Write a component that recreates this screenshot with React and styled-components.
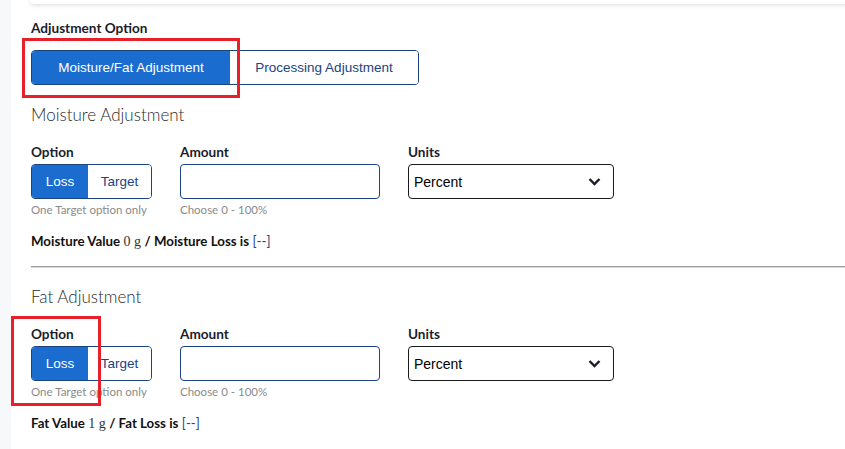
import React, { useState } from 'react'
import styled, { createGlobalStyle } from 'styled-components'

const GlobalStyle = createGlobalStyle`
  html, body {
    margin: 0;
    padding: 0;
    background: #f7f8fa;
  }
  * {
    box-sizing: border-box;
  }
`

const sans = `'Lato', 'Liberation Sans', sans-serif`

const Page = styled.div`
  display: flex;
  height: 449px;
  overflow: hidden;
`

const Rail = styled.div`
  width: 11px;
  flex-shrink: 0;
  background: #f7f8fa;
`

const Panel = styled.div`
  flex: 1;
  background: #ffffff;
  padding: 0 0 0 20px;
  font-family: ${sans};
  color: #1b1b1b;
`

const TopCard = styled.div`
  height: 4px;
  margin-left: -1px;
  margin-right: -10px;
  margin-bottom: 15px;
  background: #ffffff;
  border-radius: 0 0 6px 6px;
  box-shadow: 0 1px 4px rgba(0, 0, 0, 0.16);
`

const FieldLabel = styled.div`
  font-size: 13.6px;
  font-weight: 700;
  color: #1c1d2b;
  line-height: 18px;
  margin-bottom: ${(p) => p.gap || 3}px;
`

const Wrap = styled.div`
  position: relative;
  display: inline-flex;
`

const Highlight = styled.div`
  position: absolute;
  border: 3px solid #e8202a;
  pointer-events: none;
  left: ${(p) => p.left}px;
  top: ${(p) => p.top}px;
  width: ${(p) => p.w}px;
  height: ${(p) => p.h}px;
`

const Segmented = styled.div`
  display: inline-flex;
  border: 1px solid #1a4480;
  border-radius: 4px;
  overflow: hidden;
  height: 35px;
`

const Segment = styled.button`
  width: ${(p) => p.w}px;
  border: none;
  margin: 0;
  padding: 0;
  font-family: 'Liberation Sans', Arial, sans-serif;
  font-size: 13.5px;
  cursor: pointer;
  background: ${(p) => (p.active ? '#1a6dcf' : '#ffffff')};
  color: ${(p) => (p.active ? '#ffffff' : '#1a4480')};
`

const SectionTitle = styled.h2`
  margin: 0;
  font-size: 17px;
  font-weight: 300;
  color: #2b2b2b;
  line-height: 22px;
`

const FieldsRow = styled.div`
  display: flex;
  gap: 28px;
  align-items: flex-start;
  margin-top: 17px;
`

const Field = styled.div`
  display: flex;
  flex-direction: column;
  width: ${(p) => p.w}px;
`

const Input = styled.input`
  width: 200px;
  height: 35px;
  border: 1px solid #1a4480;
  border-radius: 4px;
  outline: none;
  padding: 0 8px;
  font-size: 14px;
`

const SelectBox = styled.div`
  width: 206px;
  height: 35px;
  border: 1px solid #1b1b1b;
  border-radius: 4px;
  display: flex;
  align-items: center;
  justify-content: space-between;
  padding: 0 12px 0 5px;
  font-family: 'Liberation Sans', Arial, sans-serif;
  font-size: 14px;
  color: #000;
`

const Hint = styled.div`
  margin-top: 4px;
  font-size: 11.5px;
  color: #8a8a8a;
  line-height: 14px;
  white-space: nowrap;
`

const Summary = styled.div`
  margin-top: 15px;
  font-size: 13.3px;
  line-height: 18px;
  color: #111;
  b {
    font-weight: 700;
  }
`

const Num = styled.span`
  font-family: 'Liberation Serif', serif;
  font-size: 14px;
  color: #333;
`

const Dash = styled.span`
  color: #1a4480;
`

const Divider = styled.hr`
  margin: 15px 0 0;
  border: none;
  border-top: 1px solid #9e9e9e;
  border-bottom: 1px solid #d8d8d8;
`

const Block = styled.div`
  padding-top: ${(p) => p.top}px;
`

const Chevron = () => (
  <svg width='13' height='9' viewBox='0 0 13 9'>
    <polyline
      points='1.5,2 6.5,7 11.5,2'
      fill='none'
      stroke='#1c1d2b'
      strokeWidth='2.4'
    />
  </svg>
)

const Adjustment = ({ title, nutrient, value, mark, topPad }) => {
  const [mode, setMode] = useState('loss')
  return (
    <Block top={topPad}>
      <SectionTitle>{title}</SectionTitle>
      <FieldsRow>
        <Field w={121}>
          <FieldLabel>Option</FieldLabel>
          <Wrap>
            <Segmented>
              <Segment w={56} active={mode === 'loss'} onClick={() => setMode('loss')}>
                Loss
              </Segment>
              <Segment w={63} active={mode === 'target'} onClick={() => setMode('target')}>
                Target
              </Segment>
            </Segmented>
            {mark && <Highlight left={-20} top={-30} w={90} h={90} />}
          </Wrap>
          <Hint>One Target option only</Hint>
        </Field>
        <Field w={200}>
          <FieldLabel>Amount</FieldLabel>
          <Input type='text' />
          <Hint>Choose 0 - 100%</Hint>
        </Field>
        <Field w={206}>
          <FieldLabel>Units</FieldLabel>
          <SelectBox>
            <span>Percent</span>
            <Chevron />
          </SelectBox>
        </Field>
      </FieldsRow>
      <Summary>
        <b>{nutrient} Value</b> <Num>{value} g</Num> <b>/ {nutrient} Loss is</b>{' '}
        <Dash>[--]</Dash>
      </Summary>
    </Block>
  )
}

const App = () => {
  const [tab, setTab] = useState('mf')
  return (
    <>
      <GlobalStyle />
      <Page>
        <Rail />
        <Panel>
          <TopCard />
          <FieldLabel gap={13}>Adjustment Option</FieldLabel>
          <Wrap>
            <Segmented>
              <Segment w={198} active={tab === 'mf'} onClick={() => setTab('mf')}>
                Moisture/Fat Adjustment
              </Segment>
              <Segment w={188} active={tab === 'proc'} onClick={() => setTab('proc')}>
                Processing Adjustment
              </Segment>
            </Segmented>
            <Highlight left={-9} top={-12} w={218} h={60} />
          </Wrap>
          <Adjustment title='Moisture Adjustment' nutrient='Moisture' value={0} topPad={19} mark={false} />
          <Divider />
          <Adjustment title='Fat Adjustment' nutrient='Fat' value={1} topPad={18} mark />
        </Panel>
      </Page>
    </>
  )
}

export default App
